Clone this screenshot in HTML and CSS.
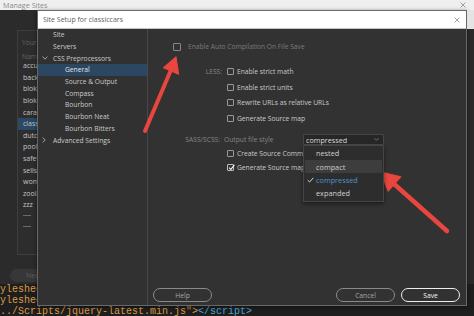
FILE: index.html
```html
<!DOCTYPE html>
<html>
<head>
<meta charset="utf-8">
<title>Site Setup</title>
<link rel="stylesheet" href="styles.css">
</head>
<body>
<div class="desktop">
  <div class="manage">
    <div class="manage-title">
      <span>Manage Sites</span>
      <svg class="x" viewBox="0 0 6 6" width="6" height="6"><path d="M0.5 0.5L5.5 5.5M5.5 0.5L0.5 5.5" stroke="#8a8a8a" stroke-width="0.8"/></svg>
    </div>
    <div class="manage-body">
      <div class="sites-panel">
        <div class="sites-caption">Your Sites</div>
        <div class="sites-head">Name <svg viewBox="0 0 6 4" width="5" height="3"><path d="M0.5 0.5L3 3L5.5 0.5" fill="none" stroke="#777" stroke-width="0.9"/></svg></div>
        <div class="sites-scroll">
          <ul class="sites-list">
            <li>accuweather</li>
            <li>backroads</li>
            <li>blokart</li>
            <li>blokhus</li>
            <li>caramel</li>
            <li class="sel">classiccars</li>
            <li>dutchoven</li>
            <li>poolside</li>
            <li>safetynet</li>
            <li>sellsheets</li>
            <li>womenswork</li>
            <li>zoolander</li>
            <li>zzz</li>
          </ul>
        </div>
        <div class="sites-tools"><span></span><span></span></div>
      </div>
      <div class="new-btn">New Site</div>
    </div>
  </div>
  <div class="editor">
    <div class="code short">ylesheet</div>
    <div class="code short">ylesheet</div>
    <div class="code">../Scripts/jquery-latest.min.js"&gt;<span class="tag">&lt;/script&gt;</span></div>
  </div>

  <section class="dialog">
    <header class="dialog-title">
      <span>Site Setup for classiccars</span>
      <svg class="x" viewBox="0 0 6 6" width="6" height="6"><path d="M0.5 0.5L5.5 5.5M5.5 0.5L0.5 5.5" stroke="#8a8a8a" stroke-width="0.8"/></svg>
    </header>
    <div class="dialog-body">
      <ul class="tree">
        <li class="l1">Site</li>
        <li class="l1">Servers</li>
        <li class="l1 tw"><span class="twisty"><svg viewBox="0 0 6 4" width="6" height="4"><path d="M0.6 0.6L3 3.2L5.4 0.6" fill="none" stroke="#aaa" stroke-width="0.9"/></svg></span>CSS Preprocessors</li>
        <li class="l2 sel">General</li>
        <li class="l2">Source &amp; Output</li>
        <li class="l2">Compass</li>
        <li class="l2">Bourbon</li>
        <li class="l2">Bourbon Neat</li>
        <li class="l2">Bourbon Bitters</li>
        <li class="l1 tw"><span class="twisty"><svg viewBox="0 0 4 6" width="4" height="6"><path d="M0.6 0.6L3.2 3L0.6 5.4" fill="none" stroke="#aaa" stroke-width="0.9"/></svg></span>Advanced Settings</li>
      </ul>

      <div class="settings">
        <div class="auto"><span class="box dim"></span><span>Enable Auto Compilation On File Save</span></div>

        <div class="less">
          <span class="lbl">LESS:</span>
          <label class="chk"><span class="box"></span>Enable strict math</label>
          <span></span>
          <label class="chk"><span class="box"></span>Enable strict units</label>
          <span></span>
          <label class="chk"><span class="box"></span>Rewrite URLs as relative URLs</label>
          <span></span>
          <label class="chk"><span class="box"></span>Generate Source map</label>
        </div>

        <div class="sass">
          <span class="lbl">SASS/SCSS:</span>
          <div class="output">
            <span class="output-label">Output file style</span>
            <div class="select">
              <span>compressed</span>
              <svg viewBox="0 0 6 4" width="5" height="3"><path d="M0.5 0.5L3 3L5.5 0.5" fill="none" stroke="#999" stroke-width="0.9"/></svg>
              <ul class="menu">
                <li>nested</li>
                <li class="hover">compact</li>
                <li class="on"><svg class="tick" viewBox="0 0 7 6" width="7" height="6"><path d="M0.7 3.2L2.6 5L6.3 0.8" fill="none" stroke="#d8d8d8" stroke-width="1"/></svg>compressed</li>
                <li>expanded</li>
              </ul>
            </div>
          </div>
          <span></span>
          <label class="chk in"><span class="box"></span>Create Source Comments</label>
          <span></span>
          <label class="chk in"><span class="box checked"><svg viewBox="0 0 7 7" width="7" height="7"><path d="M1 3.6L2.9 5.4L6.4 0.8" fill="none" stroke="#f0f0f0" stroke-width="1.2"/></svg></span>Generate Source map</label>
        </div>

        <div class="buttons">
          <button class="btn">Help</button>
          <button class="btn push">Cancel</button>
          <button class="btn save">Save</button>
        </div>
      </div>
    </div>
  </section>

  <div class="edge-strip"></div>

  <svg class="arrows" viewBox="0 0 474 316" width="474" height="316">
    <line x1="145" y1="131" x2="170.5" y2="71" stroke="#e8463e" stroke-width="4" stroke-linecap="round"/>
    <polygon points="176,57 178.6,74.2 163.6,67.6" fill="#e8463e" stroke="#e8463e" stroke-width="1.2" stroke-linejoin="round"/>
    <line x1="447" y1="231" x2="393" y2="183" stroke="#e8463e" stroke-width="4.5" stroke-linecap="round"/>
    <polygon points="381,172 400.7,176.9 388.1,191.1" fill="#e8463e" stroke="#e8463e" stroke-width="1.2" stroke-linejoin="round"/>
  </svg>
</div>
</body>
</html>
```

FILE: styles.css
```css
* { box-sizing: border-box; margin: 0; padding: 0; }

html, body {
  width: 474px;
  height: 316px;
  overflow: hidden;
  background: #1e1e1e;
}

body {
  font-family: "Open Sans", "Noto Sans", sans-serif;
  font-size: 6.7px;
  color: #c8c8c8;
}

.desktop {
  position: relative;
  width: 474px;
  height: 316px;
  display: flex;
  flex-direction: column;
  overflow: hidden;
}

/* ---------- Manage Sites window (background) ---------- */
.manage {
  height: 284px;
  flex: none;
  display: flex;
  flex-direction: column;
  background: #2b2b2b;
}

.manage-title {
  height: 10px;
  flex: none;
  background: #efefef;
  display: flex;
  align-items: center;
  justify-content: space-between;
  padding: 0 8px 0 3px;
  color: #8c8c8c;
  font-size: 7.2px;
}

.manage-body {
  flex: 1;
  display: flex;
  flex-direction: column;
  padding: 20px 0 0 17px;
}

.sites-panel {
  width: 120px;
  height: 225px;
  border-left: 1px solid #3e3e3e;
  border-top: 1px solid #3e3e3e;
  border-bottom: 1px solid #3e3e3e;
  background: #2d2d2d;
  display: flex;
  flex-direction: column;
}

.sites-caption {
  padding: 7px 0 0 4px;
  line-height: 10px;
  color: #636363;
}

.sites-head {
  margin-top: 4px;
  height: 9px;
  padding-left: 4px;
  display: flex;
  align-items: center;
  gap: 4px;
  color: #636363;
}

.sites-scroll {
  height: 150px;
  overflow: hidden;
  flex: none;
}

.sites-list {
  list-style: none;
  margin-top: -0.8px;
}

.sites-list li {
  height: 11.6px;
  line-height: 11.6px;
  padding-left: 5px;
  color: #c4c4c4;
  font-size: 7px;
}

.sites-list li.sel {
  background: #2b4865;
}

.sites-tools {
  margin-top: 4px;
  padding-left: 5px;
  display: flex;
  flex-direction: column;
  gap: 10px;
}

.sites-tools span {
  width: 8px;
  height: 1px;
  background: #6a6a6a;
}

.new-btn {
  margin: 14px 0 0 -7px;
  width: 70px;
  height: 13px;
  border-radius: 7px;
  background: #373737;
  color: #5e5e5e;
  padding-left: 16px;
  line-height: 13px;
}

/* ---------- code editor behind ---------- */
.editor {
  flex: 1;
  background: #1e1e1e;
  font-family: "Liberation Mono", "DejaVu Sans Mono", monospace;
  font-size: 10px;
  line-height: 11px;
  color: #dc9c48;
}

.editor .code { white-space: pre; height: 11px; }

.editor .code.short { width: 37px; overflow: hidden; }

.editor .tag { color: #4aa6d8; }

/* light sliver of the parent window's title bar, right of the dialog */
.edge-strip {
  position: absolute;
  left: 467px;
  top: 10px;
  width: 7px;
  height: 19px;
  background: #e4e4e4;
}

/* ---------- Site Setup dialog ---------- */
.dialog {
  position: absolute;
  left: 37px;
  top: 10px;
  width: 430px;
  height: 296px;
  border: 1px solid #686868;
  background: #323232;
  display: flex;
  flex-direction: column;
  box-shadow: 0 1px 4px rgba(0, 0, 0, 0.5);
}

.dialog-title {
  height: 18px;
  flex: none;
  background: #ffffff;
  border-bottom: 1px solid #c4c4c4;
  display: flex;
  align-items: center;
  justify-content: space-between;
  padding: 0 6px 0 5px;
  color: #5e5e5e;
  font-size: 7px;
}

.dialog-body {
  flex: 1;
  display: flex;
  min-height: 0;
}

.tree {
  width: 110px;
  flex: none;
  list-style: none;
  border-right: 1px solid #484848;
  background: #313131;
}

.tree li {
  height: 11.7px;
  display: flex;
  align-items: center;
  white-space: nowrap;
  color: #cacaca;
}

.tree li.l1 { padding-left: 15px; }
.tree li.l2 { padding-left: 27px; }
.tree li.tw { padding-left: 2px; }

.tree .twisty {
  width: 13px;
  display: flex;
  align-items: center;
  padding-left: 2px;
}

.tree li.sel {
  background: #2c4761;
  color: #e4e4e4;
}

.settings {
  flex: 1;
  display: flex;
  flex-direction: column;
  padding: 13px 6px 3px 5px;
  min-width: 0;
}

.auto {
  height: 9px;
  display: flex;
  align-items: center;
  gap: 7px;
  padding-left: 20px;
  color: #7b7b7b;
}

.box {
  width: 7px;
  height: 7px;
  flex: none;
  border: 1px solid #9a9a9a;
  border-radius: 1px;
  position: relative;
}

.box.dim {
  width: 8px;
  height: 8px;
  border-color: #868686;
}

.box.checked {
  border-color: #bdbdbd;
}

.box.checked svg {
  position: absolute;
  left: 0;
  top: -1.5px;
}

.less {
  margin-top: 13.3px;
  display: grid;
  grid-template-columns: 69px 1fr;
  grid-auto-rows: 15.4px;
  column-gap: 5px;
}

.lbl {
  text-align: right;
  align-self: center;
  color: #858585;
  white-space: nowrap;
}

.chk {
  display: flex;
  align-items: center;
  gap: 3px;
  white-space: nowrap;
  color: #cacaca;
}

.chk.in { padding-left: 3px; }

.sass {
  margin-top: 7.1px;
  display: grid;
  grid-template-columns: 67px 1fr;
  grid-template-rows: 14px 13px 16px;
  column-gap: 4px;
}

.output {
  display: flex;
  align-items: center;
}

.output-label {
  width: 79px;
  flex: none;
  color: #858585;
}

.select {
  position: relative;
  width: 81px;
  height: 11px;
  border: 1px solid #464646;
  border-radius: 1px;
  background: #272727;
  display: flex;
  align-items: center;
  justify-content: space-between;
  padding: 0 4px 0 2px;
  color: #dcdcdc;
  font-size: 7.2px;
}

.menu {
  position: absolute;
  left: -1px;
  top: 10px;
  width: 81px;
  list-style: none;
  background: #2d2d2d;
  border: 1px solid #454545;
  box-shadow: 0 2px 4px rgba(0, 0, 0, 0.45);
  padding: 0 1px 1px;
  z-index: 2;
}

.menu li {
  height: 13.4px;
  display: flex;
  align-items: center;
  padding-left: 11px;
  color: #cfcfcf;
  font-size: 7.3px;
  position: relative;
}

.menu li.hover { background: #3d3d3d; }

.menu li.on { color: #4d94d6; }

.menu .tick {
  position: absolute;
  left: 2px;
  top: 4px;
}

.buttons {
  margin-top: auto;
  display: flex;
  gap: 6px;
}

.btn {
  width: 59px;
  height: 14px;
  border: 1px solid #8a8a8a;
  border-radius: 7px;
  background: transparent;
  color: #a6a6a6;
  font-family: "Open Sans", "Noto Sans", sans-serif;
  font-size: 6.7px;
  display: flex;
  align-items: center;
  justify-content: center;
}

.btn.push { margin-left: auto; }

.btn.save {
  border: 1.5px solid #eeeeee;
  color: #f2f2f2;
}

/* ---------- annotation arrows ---------- */
.arrows {
  position: absolute;
  left: 0;
  top: 0;
  pointer-events: none;
}
```
